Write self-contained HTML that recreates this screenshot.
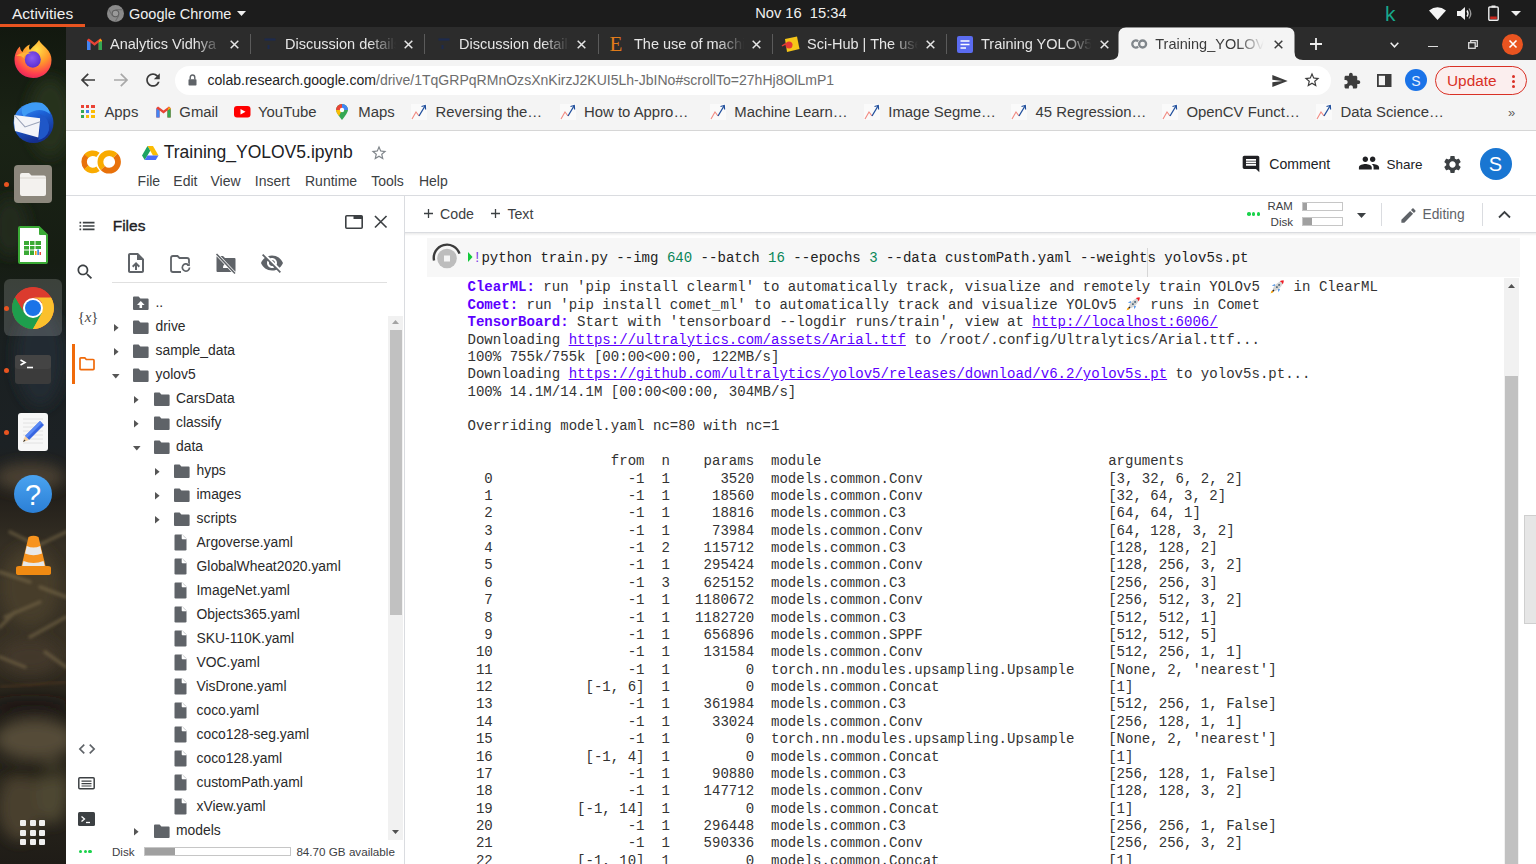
<!DOCTYPE html><html><head><meta charset="utf-8"><title>Colab</title><style>
*{box-sizing:border-box;margin:0;padding:0}
html,body{width:1536px;height:864px;overflow:hidden}
body{position:relative;font-family:"Liberation Sans",sans-serif;background:#fff;color:#202124}
.a{position:absolute;white-space:pre}
svg{position:absolute;overflow:visible}
pre{position:absolute;font-family:"Liberation Mono",monospace;white-space:pre}
</style></head><body>
<div class="a" style="left:0px;top:0px;width:1536px;height:27px;background:#1c1c1c"></div>
<div class="a" style="left:12px;top:6.38px;font-size:15.5px;line-height:15.5px;color:#f0f0f0;font-weight:400;font-family:'Liberation Sans';">Activities</div>
<div class="a" style="left:0px;top:24px;width:85px;height:3px;background:#e95420"></div>
<svg style="left:107px;top:5px;" width="17" height="17" viewBox="0 0 16 16"><circle cx="8" cy="8" r="8" fill="#8a8a8a"/><circle cx="8" cy="8" r="3.6" fill="#5c5c5c"/><circle cx="8" cy="8" r="2.6" fill="#9a9a9a"/><path d="M8 4.4 H15.2" stroke="#6e6e6e" stroke-width="1"/><path d="M4.9 9.8 L1.3 3.6" stroke="#6e6e6e" stroke-width="1"/><path d="M11.1 9.8 L7.5 16" stroke="#6e6e6e" stroke-width="1"/></svg>
<div class="a" style="left:129px;top:7.23px;font-size:14.5px;line-height:14.5px;color:#f0f0f0;font-weight:400;font-family:'Liberation Sans';">Google Chrome</div>
<svg style="left:237px;top:11px;" width="9" height="5" viewBox="0 0 9 5"><path d="M0 0H9L4.5 5z" fill="#eee"/></svg>
<div class="a" style="left:755.2px;top:6.37px;font-size:14.68px;line-height:14.68px;color:#f0f0f0;font-weight:400;font-family:'Liberation Sans';">Nov 16  15:34</div>
<div class="a" style="left:1385px;top:3.22px;font-size:21px;line-height:21px;color:#17a88b;font-weight:400;font-family:'Liberation Sans';">k</div>
<svg style="left:1429px;top:7px;" width="17" height="13" viewBox="0 0 17 13"><path d="M0 3.5 Q8.5 -3 17 3.5 L8.5 13z" fill="#f5f5f5"/></svg>
<svg style="left:1457px;top:6px;" width="16" height="15" viewBox="0 0 16 15"><path d="M0 5H3.5L8 1V14L3.5 10H0z" fill="#f2f2f2"/><path d="M10 4.5 Q12 7.5 10 10.5" stroke="#f2f2f2" stroke-width="1.4" fill="none"/><path d="M12 2.5 Q15.5 7.5 12 12.5" stroke="#999" stroke-width="1.3" fill="none"/></svg>
<svg style="left:1488px;top:5px;" width="11" height="16" viewBox="0 0 11 16"><rect x="3.5" y="0.5" width="4" height="2" fill="#eee"/><rect x="0.8" y="2" width="9.4" height="13.2" rx="1" fill="none" stroke="#eee" stroke-width="1.4"/><rect x="2.2" y="11.5" width="6.6" height="2.6" fill="#c8251b"/></svg>
<svg style="left:1511px;top:11px;" width="10" height="5" viewBox="0 0 10 5"><path d="M0 0H10L5 5z" fill="#eee"/></svg>
<svg style="left:0;top:27px" width="66" height="837" viewBox="0 0 66 837"><defs><filter id="bl" x="-50%" y="-50%" width="200%" height="200%"><feGaussianBlur stdDeviation="7"/></filter><filter id="bl2"><feGaussianBlur stdDeviation="1.6"/></filter>
<linearGradient id="dg" x1="0" y1="0" x2="0" y2="1">
<stop offset="0" stop-color="#12180f"/><stop offset="0.12" stop-color="#1a2315"/><stop offset="0.28" stop-color="#161d13"/><stop offset="0.38" stop-color="#1a2021"/><stop offset="0.5" stop-color="#1c2124"/><stop offset="0.56" stop-color="#221f1a"/><stop offset="0.62" stop-color="#352f24"/><stop offset="0.75" stop-color="#383124"/><stop offset="0.82" stop-color="#1f1c16"/><stop offset="0.9" stop-color="#2a261d"/><stop offset="1" stop-color="#1f1c17"/></linearGradient></defs>
<rect width="66" height="837" fill="url(#dg)"/>
<g filter="url(#bl)">
<ellipse cx="50" cy="90" rx="22" ry="40" fill="#26331c"/>
<ellipse cx="10" cy="200" rx="18" ry="30" fill="#212c1a"/>
<ellipse cx="40" cy="330" rx="25" ry="50" fill="#222b30"/>
<ellipse cx="30" cy="450" rx="35" ry="14" fill="#4a4030"/>
<ellipse cx="30" cy="560" rx="30" ry="40" fill="#463c2c"/>
<ellipse cx="30" cy="630" rx="30" ry="18" fill="#43392a"/>
<ellipse cx="35" cy="712" rx="40" ry="20" fill="#544c38"/>
<ellipse cx="20" cy="780" rx="22" ry="34" fill="#48412f"/>
<ellipse cx="52" cy="765" rx="16" ry="32" fill="#4d4633"/>
<ellipse cx="30" cy="745" rx="40" ry="5" fill="#14120e"/>
<ellipse cx="30" cy="680" rx="40" ry="7" fill="#1a1813"/>
</g>
<g filter="url(#bl2)" stroke="#7d6d4c" stroke-width="3.5" opacity="0.55" stroke-linecap="round">
<path d="M0 545 L30 555"/><path d="M35 520 L66 505"/><path d="M5 590 L40 575"/><path d="M30 610 L66 590"/><path d="M0 630 L25 640"/><path d="M40 560 L66 570"/><path d="M10 505 L30 515"/><path d="M45 625 L66 640"/><path d="M0 600 L15 585"/>
</g>
<path d="M0 660 L66 655" stroke="#7a4a20" stroke-width="2" opacity="0.35" filter="url(#bl2)"/>
</svg>
<svg style="left:13px;top:39px;" width="40" height="40" viewBox="0 0 40 40"><defs><radialGradient id="ff1" cx="0.6" cy="0.25" r="0.8"><stop offset="0" stop-color="#ffe14a"/><stop offset="0.45" stop-color="#ff9a2a"/><stop offset="0.8" stop-color="#ff3f4e"/><stop offset="1" stop-color="#e3245b"/></radialGradient>
<radialGradient id="ff2" cx="0.45" cy="0.4" r="0.6"><stop offset="0" stop-color="#8a5cf2"/><stop offset="1" stop-color="#5d2fd0"/></radialGradient></defs>
<path d="M20 39C9 39 1.5 30.5 1.5 21 1.5 15 4 10 7 7.5 7 10 8 12 9.5 13 11 9 14 6.5 17 5.5 15.5 8 16 10 17 11 19 8 23 6 26 1 27 4 30.5 6 33 9 37 13 38.5 17 38.5 21 38.5 31 31 39 20 39z" fill="url(#ff1)"/>
<ellipse cx="19.8" cy="20.5" rx="8" ry="8.3" fill="url(#ff2)"/>
<path d="M3 17 Q9 12 18 14 Q12 15 10.5 19 Q8 16 3 17z" fill="#ffb33a"/></svg>
<svg style="left:12px;top:100px;" width="43" height="44" viewBox="0 0 43 44"><defs><linearGradient id="tb" x1="0" y1="0" x2="0.4" y2="1"><stop offset="0" stop-color="#49a6ff"/><stop offset="0.45" stop-color="#1d63d8"/><stop offset="1" stop-color="#142f8f"/></linearGradient></defs><circle cx="21.5" cy="23" r="20" fill="url(#tb)"/><path d="M10 8 Q18 0 30 3 Q37 7 38 14 Q30 8 22 11 Q15 13 12 17 Q9 13 10 8z" fill="#3e9bf5"/><path d="M2.3 15 L28.3 18.2 L26.3 37.5 L3 30.9 Q1.5 23 2.3 15z" fill="#f3f4f8"/><path d="M2.3 15 L13 26.9 L28.9 21.5" stroke="#9aa3b8" stroke-width="1.1" fill="none"/><path d="M28.3 14 Q38 18 37 30 Q35 38 26.3 40 L28 30z" fill="#1f57c8"/></svg>
<svg style="left:14px;top:165px;" width="38" height="38" viewBox="0 0 38 38"><rect x="0" y="0" width="38" height="38" rx="4" fill="#8c877c"/><path d="M6 10 Q6 8 8 8 H15 L17.5 10.5 H30 Q32 10.5 32 12.5 V29 Q32 31 30 31 H8 Q6 31 6 29z" fill="#f3f1ee"/><path d="M6 13 H32" stroke="#d9d5cf" stroke-width="1"/></svg>
<svg style="left:18px;top:226px;" width="30" height="38" viewBox="0 0 30 38"><path d="M2 1 H21 L29 9 V36 Q29 37 28 37 H2 Q1 37 1 36 V2 Q1 1 2 1z" fill="#fff" stroke="#3aaa35" stroke-width="2"/><path d="M21 1 L29 9 H22 Q21 9 21 8z" fill="#3aaa35"/>
<rect x="6" y="15" width="17" height="14" fill="#3aaa35"/><path d="M6 19.5H23M6 24H23M11.5 15V29M17 15V29" stroke="#fff" stroke-width="1"/><rect x="16" y="23" width="7" height="7" fill="#fff"/><rect x="17" y="25" width="1.6" height="4" fill="#f39c12"/><rect x="19.3" y="23.5" width="1.6" height="5.5" fill="#2e86de"/><rect x="21.5" y="26" width="1.5" height="3" fill="#e74c3c"/></svg>
<div class="a" style="left:4px;top:279px;width:58px;height:57px;background:rgba(255,255,255,.16);border-radius:6px"></div>
<svg style="left:12px;top:287px;" width="42" height="42" viewBox="0 0 42 42"><circle cx="21" cy="21" r="21" fill="#db3b2e"/>
<path d="M21 21 L3.0 10.5 A21 21 0 0 0 21 42 z" fill="#1e9e4d"/>
<path d="M21 21 L39 10.5 A21 21 0 0 1 21 42 L21 42z" fill="#fbc02d"/>
<path d="M21 10.5 H39 A21 21 0 0 0 3.0 10.5 L12 26 A10.5 10.5 0 0 1 21 10.5z" fill="#db3b2e"/>
<path d="M12 26 L3 10.5 A21 21 0 0 0 21 42 L30 26z" fill="#1e9e4d"/>
<path d="M30 26 L21 42 A21 21 0 0 0 39 10.5 H21 A10.5 10.5 0 0 1 30 26z" fill="#fbc02d"/>
<circle cx="21" cy="21" r="10" fill="#fff"/><circle cx="21" cy="21" r="8" fill="#1a73e8"/></svg>
<svg style="left:15px;top:355px;" width="36" height="29" viewBox="0 0 36 29"><rect x="0" y="0" width="36" height="29" rx="3" fill="#3b3b3b"/><rect x="0" y="0" width="36" height="14" rx="3" fill="#444"/><path d="M5.5 5 L10 7.5 L5.5 10" stroke="#fff" stroke-width="1.6" fill="none"/><path d="M12 12.5 H18" stroke="#fff" stroke-width="1.6"/></svg>
<svg style="left:18px;top:413px;" width="30" height="38" viewBox="0 0 30 38"><rect x="0" y="0" width="30" height="38" rx="3" fill="#f7f7f7"/><path d="M5 6H25M5 10H25M5 14H25M5 18H25M5 22H25M5 26H25M5 30H25" stroke="#e2e2e2" stroke-width="1"/><path d="M22 8 L26 12 L11 27 L7 23z" fill="#3865e0"/><path d="M22 8 L24 10 L9 25 L7 23z" fill="#5a8af5"/><path d="M7 23 L11 27 L5 29z" fill="#f5d0a0"/><path d="M5 29 L6.3 26.4 L7.6 27.7z" fill="#333"/></svg>
<svg style="left:14px;top:475px;" width="38" height="38" viewBox="0 0 38 38"><defs><linearGradient id="hp" x1="0" y1="0" x2="0" y2="1"><stop offset="0" stop-color="#4aa3f0"/><stop offset="1" stop-color="#2b7fd6"/></linearGradient></defs><circle cx="19" cy="19" r="19" fill="url(#hp)"/><text x="19" y="30" text-anchor="middle" font-family="Liberation Sans" font-size="29" fill="#fff">?</text></svg>
<svg style="left:15px;top:535px;" width="37" height="41" viewBox="0 0 37 41"><path d="M13.5 2 Q18.5 -0.5 23.5 2 L31 33 H6z" fill="#f7931e"/><path d="M11.8 11 Q18.5 14 25.2 11 L27 18.5 Q18.5 22 10 18.5z" fill="#e8e8e8"/><path d="M8.5 26 Q18.5 30 28.5 26 L30 32 Q18.5 35 7 32z" fill="#e8e8e8"/><path d="M1 33 Q1 31 4 31 H33 Q36 31 36 33 V38 Q36 40 33 40 H4 Q1 40 1 38z" fill="#f08a12"/></svg>
<div class="a" style="left:4px;top:181.5px;width:5px;height:5px;border-radius:50%;background:#e95420"></div>
<div class="a" style="left:4px;top:305.5px;width:5px;height:5px;border-radius:50%;background:#e95420"></div>
<div class="a" style="left:4px;top:367.5px;width:5px;height:5px;border-radius:50%;background:#e95420"></div>
<div class="a" style="left:4px;top:429.5px;width:5px;height:5px;border-radius:50%;background:#e95420"></div>
<div class="a" style="left:20.0px;top:820.0px;width:6px;height:6px;background:#eee;border-radius:1px"></div>
<div class="a" style="left:20.0px;top:829.5px;width:6px;height:6px;background:#eee;border-radius:1px"></div>
<div class="a" style="left:20.0px;top:839.0px;width:6px;height:6px;background:#eee;border-radius:1px"></div>
<div class="a" style="left:29.5px;top:820.0px;width:6px;height:6px;background:#eee;border-radius:1px"></div>
<div class="a" style="left:29.5px;top:829.5px;width:6px;height:6px;background:#eee;border-radius:1px"></div>
<div class="a" style="left:29.5px;top:839.0px;width:6px;height:6px;background:#eee;border-radius:1px"></div>
<div class="a" style="left:39.0px;top:820.0px;width:6px;height:6px;background:#eee;border-radius:1px"></div>
<div class="a" style="left:39.0px;top:829.5px;width:6px;height:6px;background:#eee;border-radius:1px"></div>
<div class="a" style="left:39.0px;top:839.0px;width:6px;height:6px;background:#eee;border-radius:1px"></div>
<div class="a" style="left:66px;top:27px;width:1470px;height:33px;background:#2c2c2c"></div>
<div class="a" style="left:110px;top:36.73px;width:112px;overflow:hidden;font-size:14.5px;line-height:14.5px;height:19px;color:#e6e6e6;-webkit-mask-image:linear-gradient(90deg,#000 86px,transparent 112px)">Analytics Vidhya</div>
<svg style="left:230px;top:39.5px;" width="9" height="9" viewBox="0 0 9 9"><path d="M0.7 0.7L8.3 8.3M8.3 0.7L0.7 8.3" stroke="#e6e6e6" stroke-width="1.5"/></svg>
<div class="a" style="left:285px;top:36.73px;width:111px;overflow:hidden;font-size:14.5px;line-height:14.5px;height:19px;color:#e6e6e6;-webkit-mask-image:linear-gradient(90deg,#000 85px,transparent 111px)">Discussion details</div>
<svg style="left:404px;top:39.5px;" width="9" height="9" viewBox="0 0 9 9"><path d="M0.7 0.7L8.3 8.3M8.3 0.7L0.7 8.3" stroke="#e6e6e6" stroke-width="1.5"/></svg>
<div class="a" style="left:459px;top:36.73px;width:110px;overflow:hidden;font-size:14.5px;line-height:14.5px;height:19px;color:#e6e6e6;-webkit-mask-image:linear-gradient(90deg,#000 84px,transparent 110px)">Discussion details</div>
<svg style="left:577px;top:39.5px;" width="9" height="9" viewBox="0 0 9 9"><path d="M0.7 0.7L8.3 8.3M8.3 0.7L0.7 8.3" stroke="#e6e6e6" stroke-width="1.5"/></svg>
<div class="a" style="left:634px;top:36.73px;width:110px;overflow:hidden;font-size:14.5px;line-height:14.5px;height:19px;color:#e6e6e6;-webkit-mask-image:linear-gradient(90deg,#000 84px,transparent 110px)">The use of machine</div>
<svg style="left:752px;top:39.5px;" width="9" height="9" viewBox="0 0 9 9"><path d="M0.7 0.7L8.3 8.3M8.3 0.7L0.7 8.3" stroke="#e6e6e6" stroke-width="1.5"/></svg>
<div class="a" style="left:807px;top:36.73px;width:111px;overflow:hidden;font-size:14.5px;line-height:14.5px;height:19px;color:#e6e6e6;-webkit-mask-image:linear-gradient(90deg,#000 85px,transparent 111px)">Sci-Hub | The use</div>
<svg style="left:926px;top:39.5px;" width="9" height="9" viewBox="0 0 9 9"><path d="M0.7 0.7L8.3 8.3M8.3 0.7L0.7 8.3" stroke="#e6e6e6" stroke-width="1.5"/></svg>
<div class="a" style="left:981px;top:36.73px;width:110.5px;overflow:hidden;font-size:14.5px;line-height:14.5px;height:19px;color:#e6e6e6;-webkit-mask-image:linear-gradient(90deg,#000 84.5px,transparent 110.5px)">Training YOLOv5</div>
<svg style="left:1099.5px;top:39.5px;" width="9" height="9" viewBox="0 0 9 9"><path d="M0.7 0.7L8.3 8.3M8.3 0.7L0.7 8.3" stroke="#e6e6e6" stroke-width="1.5"/></svg>
<div class="a" style="left:249.5px;top:34px;width:1.2px;height:20px;background:#5b5b5b"></div>
<div class="a" style="left:424px;top:34px;width:1.2px;height:20px;background:#5b5b5b"></div>
<div class="a" style="left:598px;top:34px;width:1.2px;height:20px;background:#5b5b5b"></div>
<div class="a" style="left:772px;top:34px;width:1.2px;height:20px;background:#5b5b5b"></div>
<div class="a" style="left:945.5px;top:34px;width:1.2px;height:20px;background:#5b5b5b"></div>
<svg style="left:87px;top:38px;" width="15" height="12" viewBox="0 0 15 12"><path d="M0 2 V12 H3.4 V4.6 L7.5 7.7 11.6 4.6 V12 H15 V2 L13.2 0.6 7.5 4.8 1.8 0.6z" fill="#ea4335"/><path d="M0 2.5V12H3.4V4.6z" fill="#4285f4"/><path d="M15 2.5V12H11.6V4.6z" fill="#34a853"/><path d="M11.6 4.6 L15 2 V4.3 L13.2 0.6z" fill="#fbbc04"/></svg>
<svg style="left:264px;top:37px;" width="12" height="14" viewBox="0 0 12 14"><path d="M0.5 2.5 H11.5" stroke="#1d2a4d" stroke-width="2.2"/><path d="M4.5 8 V12" stroke="#1d2a4d" stroke-width="2"/></svg>
<svg style="left:438px;top:37px;" width="12" height="14" viewBox="0 0 12 14"><path d="M0.5 2.5 H11.5" stroke="#1d2a4d" stroke-width="2.2"/><path d="M4.5 8 V12" stroke="#1d2a4d" stroke-width="2"/></svg>
<div class="a" style="left:609.5px;top:33.72px;font-size:21px;line-height:21px;color:#e07b1a;font-weight:400;font-family:'Liberation Serif';">E</div>
<svg style="left:782px;top:36px;" width="18" height="17" viewBox="0 0 18 17"><path d="M3 3 L15 0.5 L17.5 13 L5 16z" fill="#f5c518"/><circle cx="7" cy="9" r="3.5" fill="#e53935"/><path d="M0 10 Q5 6 10 9" stroke="#e53935" stroke-width="1.5" fill="none"/></svg>
<svg style="left:957px;top:36px;" width="16" height="17" viewBox="0 0 16 17"><rect x="0" y="0" width="16" height="17" rx="2" fill="#5b6cf0"/><path d="M3.5 5H12.5M3.5 8.5H12.5M3.5 12H9" stroke="#fff" stroke-width="1.6"/></svg>
<svg style="left:1110px;top:27px" width="193" height="33" viewBox="0 0 193 33"><path d="M0 33 Q8.5 33 8.5 25 V8 Q8.5 0.5 16 0.5 H177 Q184.5 0.5 184.5 8 V25 Q184.5 33 193 33z" fill="#f4f4f4"/></svg>
<svg style="left:1131px;top:39px;" width="17" height="10" viewBox="0 0 17 10"><path d="M7.14 2.40 A3.5 3.5 0 1 0 7.14 7.60" stroke="#80868b" stroke-width="2.3" fill="none"/><circle cx="11.6" cy="5" r="3.5" stroke="#80868b" stroke-width="2.3" fill="none"/></svg>
<div class="a" style="left:1155.3px;top:36.73px;width:108.70000000000005px;overflow:hidden;font-size:14.5px;line-height:14.5px;height:19px;color:#3c3c3c;-webkit-mask-image:linear-gradient(90deg,#000 82.70000000000005px,transparent 108.70000000000005px)">Training_YOLOV5.ipynb</div>
<svg style="left:1274px;top:39.5px;" width="9" height="9" viewBox="0 0 9 9"><path d="M0.7 0.7L8.3 8.3M8.3 0.7L0.7 8.3" stroke="#3c3c3c" stroke-width="1.5"/></svg>
<svg style="left:1310px;top:38px;" width="12" height="12" viewBox="0 0 12 12"><path d="M6 0V12M0 6H12" stroke="#eee" stroke-width="1.8"/></svg>
<svg style="left:1390px;top:42px;" width="9" height="6" viewBox="0 0 9 6"><path d="M0.7 0.7 L4.5 4.8 L8.3 0.7" stroke="#eee" stroke-width="1.5" fill="none"/></svg>
<div class="a" style="left:1428px;top:45.5px;width:10px;height:1.6px;background:#ddd"></div>
<svg style="left:1468px;top:40px;" width="10" height="9" viewBox="0 0 10 9"><rect x="0.7" y="2.7" width="6.5" height="5.6" stroke="#ddd" stroke-width="1.3" fill="none"/><path d="M2.7 2.7 V0.7 H9.3 V6.3 H7.2" stroke="#ddd" stroke-width="1.3" fill="none"/></svg>
<div class="a" style="left:1502.4px;top:33.9px;width:20.8px;height:20.8px;border-radius:50%;background:#e95420"></div>
<svg style="left:1508.8px;top:40.3px;" width="8" height="8" viewBox="0 0 8 8"><path d="M0.5 0.5L7.5 7.5M7.5 0.5L0.5 7.5" stroke="#fff" stroke-width="1.6"/></svg>
<div class="a" style="left:66px;top:60px;width:1470px;height:71px;background:#f4f4f4;border-bottom:1px solid #d6d6d6"></div>
<div class="a" style="left:174.5px;top:65.5px;width:1156px;height:29px;border-radius:14.5px;background:#fff"></div>
<svg style="left:80px;top:72px;" width="16" height="16" viewBox="0 0 16 16"><path d="M15 8H2.2M8.2 1.8L2 8L8.2 14.2" stroke="#3c3c3c" stroke-width="1.7" fill="none"/></svg>
<svg style="left:112.5px;top:72px;" width="16" height="16" viewBox="0 0 16 16"><path d="M1 8H13.8M7.8 1.8L14 8L7.8 14.2" stroke="#a8a8a8" stroke-width="1.7" fill="none"/></svg>
<svg style="left:140.5px;top:68px;" width="24" height="24" viewBox="0 0 24 24"><path d="M17.65 6.35C16.2 4.9 14.21 4 12 4c-4.42 0-7.99 3.58-7.99 8s3.57 8 7.99 8c3.73 0 6.84-2.55 7.73-6h-2.08c-.82 2.33-3.04 4-5.65 4-3.31 0-6-2.69-6-6s2.69-6 6-6c1.66 0 3.14.69 4.22 1.78L13 11h7V4l-2.35 2.35z" fill="#3c3c3c" transform="translate(12 12) scale(0.85) translate(-12 -12)"/></svg>
<svg style="left:187.5px;top:74px;" width="9" height="12" viewBox="0 0 9 12"><path d="M2.2 5.5 V3.6 Q2.2 1 4.5 1 Q6.8 1 6.8 3.6 V5.5" stroke="#5f6368" stroke-width="1.4" fill="none"/><rect x="0.5" y="5.2" width="8" height="6.4" rx="0.8" fill="#5f6368"/></svg>
<div class="a" style="left:207.5px;top:73.32px;font-size:14.04px;line-height:14.04px;color:#242424;font-weight:400;font-family:'Liberation Sans';">colab.research.google.com<span style="color:#6d6d6d">/drive/1TqGRPqRMnOzsXnKirzJ2KUI5Lh-JbINo#scrollTo=27hHj8OlLmP1</span></div>
<svg style="left:1272px;top:74.5px;" width="16" height="12" viewBox="0 0 23 18"><path d="M0.01 18 L23 9 0.01 0 0 7 15 9 0 11z" fill="#3c3c3c"/></svg>
<svg style="left:1303px;top:71px;" width="18" height="18" viewBox="0 0 24 24"><path d="M22 9.24l-7.19-.62L12 2 9.19 8.63 2 9.24l5.46 4.73L5.82 21 12 17.27 18.18 21l-1.63-7.03L22 9.24zM12 15.4l-3.76 2.27 1-4.28-3.32-2.88 4.38-.38L12 6.1l1.71 4.04 4.38.38-3.32 2.88 1 4.28L12 15.4z" fill="#3c3c3c"/></svg>
<svg style="left:1343px;top:72px;" width="18" height="18" viewBox="0 0 24 24"><path d="M20.5 11H19V7c0-1.1-.9-2-2-2h-4V3.5C13 2.12 11.88 1 10.5 1S8 2.12 8 3.5V5H4c-1.1 0-1.99.9-1.99 2v3.8H3.5c1.49 0 2.7 1.21 2.7 2.7s-1.21 2.7-2.7 2.7H2V20c0 1.1.9 2 2 2h3.8v-1.5c0-1.49 1.21-2.7 2.7-2.7 1.49 0 2.7 1.21 2.7 2.7V22H17c1.1 0 2-.9 2-2v-4h1.5c1.38 0 2.5-1.12 2.5-2.5S21.88 11 20.5 11z" fill="#3c3c3c"/></svg>
<svg style="left:1377px;top:73.5px;" width="14.5" height="13" viewBox="0 0 14.5 13"><rect x="0.9" y="0.9" width="12.7" height="11.2" stroke="#3c3c3c" stroke-width="1.8" fill="none"/><rect x="8" y="0.9" width="5.6" height="11.2" fill="#3c3c3c"/></svg>
<div class="a" style="left:1405px;top:69px;width:22px;height:22px;border-radius:50%;background:#1a73e8"></div>
<div class="a" style="left:1411.3px;top:73.65px;font-size:14px;line-height:14px;color:#e8f0fe;font-weight:400;font-family:'Liberation Sans';">S</div>
<div class="a" style="left:1435px;top:66px;width:92px;height:28.5px;border-radius:14.25px;background:#fbeeee;border:1px solid #d93025"></div>
<div class="a" style="left:1447px;top:72.96px;font-size:15.4px;line-height:15.4px;color:#d93025;font-weight:400;font-family:'Liberation Sans';">Update</div>
<div class="a" style="left:1512px;top:74.5px;width:3px;height:3px;border-radius:50%;background:#d93025"></div>
<div class="a" style="left:1512px;top:79.5px;width:3px;height:3px;border-radius:50%;background:#d93025"></div>
<div class="a" style="left:1512px;top:84.5px;width:3px;height:3px;border-radius:50%;background:#d93025"></div>
<div class="a" style="left:81.0px;top:104.5px;width:3.2px;height:3.2px;background:#ea4335"></div>
<div class="a" style="left:81.0px;top:109.7px;width:3.2px;height:3.2px;background:#34a853"></div>
<div class="a" style="left:81.0px;top:114.9px;width:3.2px;height:3.2px;background:#34a853"></div>
<div class="a" style="left:86.2px;top:104.5px;width:3.2px;height:3.2px;background:#ea4335"></div>
<div class="a" style="left:86.2px;top:109.7px;width:3.2px;height:3.2px;background:#4285f4"></div>
<div class="a" style="left:86.2px;top:114.9px;width:3.2px;height:3.2px;background:#fbbc04"></div>
<div class="a" style="left:91.4px;top:104.5px;width:3.2px;height:3.2px;background:#ea4335"></div>
<div class="a" style="left:91.4px;top:109.7px;width:3.2px;height:3.2px;background:#fbbc04"></div>
<div class="a" style="left:91.4px;top:114.9px;width:3.2px;height:3.2px;background:#fbbc04"></div>
<div class="a" style="left:104.4px;top:105.19px;font-size:14.9px;line-height:14.9px;color:#3a3a3a;font-weight:400;font-family:'Liberation Sans';">Apps</div>
<svg style="left:155.5px;top:106px;" width="15" height="11.5" viewBox="0 0 15 12"><path d="M0 2 V12 H3.4 V4.6 L7.5 7.7 11.6 4.6 V12 H15 V2 L13.2 0.6 7.5 4.8 1.8 0.6z" fill="#ea4335"/><path d="M0 2.5V12H3.4V4.6z" fill="#4285f4"/><path d="M15 2.5V12H11.6V4.6z" fill="#34a853"/><path d="M11.6 4.6 L15 2 V4.3 L13.2 0.6z" fill="#fbbc04"/></svg>
<div class="a" style="left:179.3px;top:105.19px;font-size:14.9px;line-height:14.9px;color:#3a3a3a;font-weight:400;font-family:'Liberation Sans';">Gmail</div>
<svg style="left:233.5px;top:105.5px;" width="16.5" height="11.5" viewBox="0 0 16.5 11.5"><rect width="16.5" height="11.5" rx="3" fill="#ff0000"/><path d="M6.5 3 L11.5 5.75 L6.5 8.5z" fill="#fff"/></svg>
<div class="a" style="left:258px;top:105.19px;font-size:14.9px;line-height:14.9px;color:#3a3a3a;font-weight:400;font-family:'Liberation Sans';">YouTube</div>
<svg style="left:336px;top:103.5px;" width="12" height="16" viewBox="0 0 12 16"><path d="M6 16 Q0 8.5 0 6 A6 6 0 0 1 12 6 Q12 8.5 6 16z" fill="#34a853"/><path d="M6 0 A6 6 0 0 1 12 6 L6 6z" fill="#4285f4"/><path d="M0 6 A6 6 0 0 1 6 0 L6 6z" fill="#ea4335"/><path d="M0 6 Q0 8.5 3 12 L6 6z" fill="#fbbc04"/><circle cx="6" cy="6" r="2.2" fill="#fff"/></svg>
<div class="a" style="left:358.3px;top:105.19px;font-size:14.9px;line-height:14.9px;color:#3a3a3a;font-weight:400;font-family:'Liberation Sans';">Maps</div>
<svg style="left:411px;top:103.5px;" width="16" height="16" viewBox="0 0 16 16"><rect width="16" height="16" fill="#fafafa"/><path d="M1 15 L5 8 L8 12" stroke="#f28b82" stroke-width="1.1" fill="none"/><path d="M8 12 L14 2" stroke="#1f4e9c" stroke-width="1.3" fill="none"/><path d="M10.5 2.5 L14.3 1.5 L14.6 5.5" stroke="#1f4e9c" stroke-width="1.2" fill="none"/></svg>
<div class="a" style="left:435.5px;top:105.19px;font-size:14.9px;line-height:14.9px;color:#3a3a3a;font-weight:400;font-family:'Liberation Sans';">Reversing the…</div>
<svg style="left:559.5px;top:103.5px;" width="16" height="16" viewBox="0 0 16 16"><rect width="16" height="16" fill="#fafafa"/><path d="M1 15 L5 8 L8 12" stroke="#f28b82" stroke-width="1.1" fill="none"/><path d="M8 12 L14 2" stroke="#1f4e9c" stroke-width="1.3" fill="none"/><path d="M10.5 2.5 L14.3 1.5 L14.6 5.5" stroke="#1f4e9c" stroke-width="1.2" fill="none"/></svg>
<div class="a" style="left:584px;top:105.19px;font-size:14.9px;line-height:14.9px;color:#3a3a3a;font-weight:400;font-family:'Liberation Sans';">How to Appro…</div>
<svg style="left:710px;top:103.5px;" width="16" height="16" viewBox="0 0 16 16"><rect width="16" height="16" fill="#fafafa"/><path d="M1 15 L5 8 L8 12" stroke="#f28b82" stroke-width="1.1" fill="none"/><path d="M8 12 L14 2" stroke="#1f4e9c" stroke-width="1.3" fill="none"/><path d="M10.5 2.5 L14.3 1.5 L14.6 5.5" stroke="#1f4e9c" stroke-width="1.2" fill="none"/></svg>
<div class="a" style="left:734.3px;top:105.19px;font-size:14.9px;line-height:14.9px;color:#3a3a3a;font-weight:400;font-family:'Liberation Sans';">Machine Learn…</div>
<svg style="left:864px;top:103.5px;" width="16" height="16" viewBox="0 0 16 16"><rect width="16" height="16" fill="#fafafa"/><path d="M1 15 L5 8 L8 12" stroke="#f28b82" stroke-width="1.1" fill="none"/><path d="M8 12 L14 2" stroke="#1f4e9c" stroke-width="1.3" fill="none"/><path d="M10.5 2.5 L14.3 1.5 L14.6 5.5" stroke="#1f4e9c" stroke-width="1.2" fill="none"/></svg>
<div class="a" style="left:888.3px;top:105.19px;font-size:14.9px;line-height:14.9px;color:#3a3a3a;font-weight:400;font-family:'Liberation Sans';">Image Segme…</div>
<svg style="left:1011.4px;top:103.5px;" width="16" height="16" viewBox="0 0 16 16"><rect width="16" height="16" fill="#fafafa"/><path d="M1 15 L5 8 L8 12" stroke="#f28b82" stroke-width="1.1" fill="none"/><path d="M8 12 L14 2" stroke="#1f4e9c" stroke-width="1.3" fill="none"/><path d="M10.5 2.5 L14.3 1.5 L14.6 5.5" stroke="#1f4e9c" stroke-width="1.2" fill="none"/></svg>
<div class="a" style="left:1035.5px;top:105.19px;font-size:14.9px;line-height:14.9px;color:#3a3a3a;font-weight:400;font-family:'Liberation Sans';">45 Regression…</div>
<svg style="left:1162.3px;top:103.5px;" width="16" height="16" viewBox="0 0 16 16"><rect width="16" height="16" fill="#fafafa"/><path d="M1 15 L5 8 L8 12" stroke="#f28b82" stroke-width="1.1" fill="none"/><path d="M8 12 L14 2" stroke="#1f4e9c" stroke-width="1.3" fill="none"/><path d="M10.5 2.5 L14.3 1.5 L14.6 5.5" stroke="#1f4e9c" stroke-width="1.2" fill="none"/></svg>
<div class="a" style="left:1186.4px;top:105.19px;font-size:14.9px;line-height:14.9px;color:#3a3a3a;font-weight:400;font-family:'Liberation Sans';">OpenCV Funct…</div>
<svg style="left:1316px;top:103.5px;" width="16" height="16" viewBox="0 0 16 16"><rect width="16" height="16" fill="#fafafa"/><path d="M1 15 L5 8 L8 12" stroke="#f28b82" stroke-width="1.1" fill="none"/><path d="M8 12 L14 2" stroke="#1f4e9c" stroke-width="1.3" fill="none"/><path d="M10.5 2.5 L14.3 1.5 L14.6 5.5" stroke="#1f4e9c" stroke-width="1.2" fill="none"/></svg>
<div class="a" style="left:1340.4px;top:105.19px;font-size:14.9px;line-height:14.9px;color:#3a3a3a;font-weight:400;font-family:'Liberation Sans';">Data Science…</div>
<div class="a" style="left:1508px;top:105.50px;font-size:13px;line-height:13px;color:#5f5f5f;font-weight:400;font-family:'Liberation Sans';">»</div>
<div class="a" style="left:66px;top:131px;width:1470px;height:65px;background:#fff;border-bottom:1px solid #dadce0"></div>
<svg style="left:70px;top:140px;" width="60" height="40" viewBox="0 0 60 40"><path d="M16.17 16.24 A8.65 8.65 0 0 1 28.01 14.89" stroke="#f9ab00" stroke-width="5.5" fill="none"/><path d="M16.37 27.59 A8.65 8.65 0 0 1 16.37 16.01" stroke="#e8710a" stroke-width="5.5" fill="none"/><path d="M28.01 28.71 A8.65 8.65 0 0 1 16.17 27.36" stroke="#f9ab00" stroke-width="5.5" fill="none"/><path d="M45.32 15.58 A8.8 8.8 0 1 1 32.77 27.91" stroke="#e8710a" stroke-width="5.8" fill="none"/><path d="M32.77 27.91 A8.8 8.8 0 0 1 45.32 15.58" stroke="#f9ab00" stroke-width="5.8" fill="none"/></svg>
<svg style="left:141.5px;top:145.5px;" width="16.5" height="14" viewBox="0 0 16.5 14"><path d="M5.5 0 H11 L16.5 9.5 H11z" fill="#fbbc04"/><path d="M5.5 0 L0 9.5 L2.75 14 L8.25 4.75z" fill="#1ea362"/><path d="M2.75 14 H13.75 L16.5 9.5 H5.5z" fill="#4a6cf7"/></svg>
<div class="a" style="left:163.7px;top:144.09px;font-size:17.5px;line-height:17.5px;color:#202124;font-weight:400;font-family:'Liberation Sans';">Training_YOLOV5.ipynb</div>
<svg style="left:370px;top:144px;" width="18" height="18" viewBox="0 0 24 24"><path d="M22 9.24l-7.19-.62L12 2 9.19 8.63 2 9.24l5.46 4.73L5.82 21 12 17.27 18.18 21l-1.63-7.03L22 9.24zM12 15.4l-3.76 2.27 1-4.28-3.32-2.88 4.38-.38L12 6.1l1.71 4.04 4.38.38-3.32 2.88 1 4.28L12 15.4z" fill="#80868b"/></svg>
<div class="a" style="left:137.6px;top:173.55px;font-size:14px;line-height:14px;color:#3c4043;font-weight:400;font-family:'Liberation Sans';">File</div>
<div class="a" style="left:173.3px;top:173.55px;font-size:14px;line-height:14px;color:#3c4043;font-weight:400;font-family:'Liberation Sans';">Edit</div>
<div class="a" style="left:210.5px;top:173.55px;font-size:14px;line-height:14px;color:#3c4043;font-weight:400;font-family:'Liberation Sans';">View</div>
<div class="a" style="left:254.8px;top:173.55px;font-size:14px;line-height:14px;color:#3c4043;font-weight:400;font-family:'Liberation Sans';">Insert</div>
<div class="a" style="left:305px;top:173.55px;font-size:14px;line-height:14px;color:#3c4043;font-weight:400;font-family:'Liberation Sans';">Runtime</div>
<div class="a" style="left:371.2px;top:173.55px;font-size:14px;line-height:14px;color:#3c4043;font-weight:400;font-family:'Liberation Sans';">Tools</div>
<div class="a" style="left:418.9px;top:173.55px;font-size:14px;line-height:14px;color:#3c4043;font-weight:400;font-family:'Liberation Sans';">Help</div>
<svg style="left:1241px;top:154px;" width="20" height="20" viewBox="0 0 24 24"><path d="M21.99 4c0-1.1-.89-2-1.99-2H4c-1.1 0-2 .9-2 2v12c0 1.1.9 2 2 2h14l4 4-.01-18zM18 14H6v-2h12v2zm0-3H6V9h12v2zm0-3H6V6h12v2z" fill="#202124"/></svg>
<div class="a" style="left:1269.3px;top:157.19px;font-size:14.07px;line-height:14.07px;color:#202124;font-weight:400;font-family:'Liberation Sans';">Comment</div>
<svg style="left:1357.5px;top:152px;" width="22" height="22" viewBox="0 0 24 24"><path d="M16 11c1.66 0 2.99-1.34 2.99-3S17.66 5 16 5c-1.66 0-3 1.34-3 3s1.34 3 3 3zm-8 0c1.66 0 2.99-1.34 2.99-3S9.66 5 8 5C6.34 5 5 6.34 5 8s1.34 3 3 3zm0 2c-2.33 0-7 1.17-7 3.5V19h14v-2.5c0-2.330-4.67-3.5-7-3.5zm8 0c-.29 0-.62.02-.97.05 1.16.84 1.97 1.97 1.97 3.45V19h6v-2.5c0-2.33-4.67-3.5-7-3.5z" fill="#202124"/></svg>
<div class="a" style="left:1386.5px;top:157.67px;font-size:13.5px;line-height:13.5px;color:#202124;font-weight:400;font-family:'Liberation Sans';">Share</div>
<svg style="left:1441.5px;top:153.5px;" width="21" height="21" viewBox="0 0 24 24"><path d="M19.14 12.94c.04-.3.06-.61.06-.94 0-.32-.02-.64-.07-.94l2.03-1.58c.18-.14.23-.41.12-.61l-1.92-3.32c-.12-.22-.37-.29-.59-.22l-2.39.96c-.5-.38-1.030-.7-1.62-.94l-.36-2.54c-.04-.24-.24-.41-.48-.41h-3.84c-.24 0-.43.17-.47.41l-.36 2.54c-.59.24-1.13.57-1.62.94l-2.39-.96c-.22-.08-.47 0-.59.22L2.74 8.87c-.12.21-.08.47.12.61l2.03 1.58c-.05.3-.09.63-.09.94s.02.64.07.94l-2.03 1.58c-.18.14-.23.41-.12.61l1.92 3.32c.12.22.37.29.59.22l2.39-.96c.5.38 1.03.7 1.62.94l.36 2.54c.05.24.24.41.48.41h3.84c.24 0 .44-.17.47-.41l.36-2.54c.59-.24 1.13-.56 1.62-.94l2.39.96c.22.08.47 0 .59-.22l1.92-3.32c.12-.22.07-.47-.12-.61l-2.01-1.58zM12 15.6c-1.98 0-3.6-1.62-3.6-3.6s1.62-3.6 3.6-3.6 3.6 1.62 3.6 3.6-1.62 3.6-3.6 3.6z" fill="#3c4043"/></svg>
<div class="a" style="left:1480px;top:148px;width:32px;height:32px;border-radius:50%;background:#1976d2"></div>
<div class="a" style="left:1488.8px;top:154.07px;font-size:20px;line-height:20px;color:#fff;font-weight:400;font-family:'Liberation Sans';">S</div>
<div class="a" style="left:66px;top:196px;width:338px;height:668px;background:#fff"></div>
<div class="a" style="left:404px;top:196px;width:1px;height:668px;background:#dadce0"></div>
<svg style="left:76.5px;top:215.5px;" width="20" height="20" viewBox="0 0 24 24"><path d="M3 13h2v-2H3v2zm0 4h2v-2H3v2zm0-8h2V7H3v2zm4 4h14v-2H7v2zm0 4h14v-2H7v2zM7 7v2h14V7H7z" fill="#3c4043"/></svg>
<svg style="left:75px;top:262px;" width="20" height="20" viewBox="0 0 24 24"><path d="M15.5 14h-.79l-.28-.27C15.41 12.59 16 11.11 16 9.5 16 5.91 13.09 3 9.5 3S3 5.91 3 9.5 5.91 16 9.5 16c1.61 0 3.09-.59 4.23-1.57l.27.28v.79l5 4.99L20.49 19l-4.99-5zm-6 0C7.01 14 5 11.99 5 9.5S7.01 5 9.5 5 14 7.01 14 9.5 11.99 14 9.5 14z" fill="#3c4043"/></svg>
<div class="a" style="left:77.5px;top:308.88px;font-size:15.5px;line-height:15.5px;color:#4a4a4a;font-weight:400;font-family:'Liberation Serif';letter-spacing:-0.3px">{<i style="font-family:Liberation Serif;font-size:15px">x</i>}</div>
<div class="a" style="left:72px;top:344px;width:3.2px;height:39.5px;background:#f06a0a"></div>
<svg style="left:78.5px;top:357px;" width="16" height="13.5" viewBox="0 0 16 13.5"><path d="M1 1.8 Q1 0.9 1.9 0.9 H5.8 L7.3 2.5 H14.1 Q15 2.5 15 3.4 V11.7 Q15 12.6 14.1 12.6 H1.9 Q1 12.6 1 11.7z" stroke="#f06a0a" stroke-width="1.7" fill="none"/></svg>
<svg style="left:76.5px;top:738.5px;" width="20" height="20" viewBox="0 0 24 24"><path d="M9.4 16.6L4.8 12l4.6-4.6L8 6l-6 6 6 6 1.4-1.4zm5.2 0l4.6-4.6-4.6-4.6L16 6l6 6-6 6-1.4-1.4z" fill="#5f6368"/></svg>
<svg style="left:78px;top:776.5px;" width="17" height="12.5" viewBox="0 0 17 12.5"><rect x="0.8" y="0.8" width="15.4" height="10.9" rx="1" stroke="#3c4043" stroke-width="1.5" fill="none"/><path d="M3.5 4.2H13.5M3.5 6.6H13.5M3.5 9H13.5" stroke="#3c4043" stroke-width="1.2"/></svg>
<svg style="left:78px;top:811.5px;" width="17" height="14" viewBox="0 0 17 14"><rect x="0" y="0" width="17" height="14" rx="1.5" fill="#3c4043"/><path d="M3.5 4.5 L6.5 7 L3.5 9.5" stroke="#fff" stroke-width="1.3" fill="none"/><path d="M8 10.5H12" stroke="#fff" stroke-width="1.3"/></svg>
<div class="a" style="left:79.0px;top:850px;width:3.4px;height:3.4px;background:#19d24a;border-radius:50%"></div>
<div class="a" style="left:83.6px;top:850px;width:3.4px;height:3.4px;background:#19d24a;border-radius:50%"></div>
<div class="a" style="left:88.2px;top:850px;width:3.4px;height:3.4px;background:#19d24a;border-radius:50%"></div>
<div class="a" style="left:112.7px;top:218.38px;font-size:15.5px;line-height:15.5px;color:#202124;font-weight:400;font-family:'Liberation Sans';-webkit-text-stroke:0.35px #202124">Files</div>
<svg style="left:345px;top:214.5px;" width="18" height="14" viewBox="0 0 18 14"><rect x="0.8" y="0.8" width="16.4" height="12.4" rx="1" stroke="#3c4043" stroke-width="1.6" fill="none"/><rect x="8.5" y="0.8" width="8.7" height="3.2" fill="#3c4043"/></svg>
<svg style="left:374px;top:215px;" width="13.5" height="13.5" viewBox="0 0 14 14"><path d="M1 1L13 13M13 1L1 13" stroke="#3c4043" stroke-width="1.7"/></svg>
<svg style="left:124px;top:251px;" width="24" height="24" viewBox="0 0 24 24"><path d="M14 2H6c-1.1 0-1.99.9-1.99 2L4 20c0 1.1.89 2 1.99 2H18c1.1 0 2-.9 2-2V8l-6-6zm4 18H6V4h7v5h5v11zM8 15.01l1.41 1.41L11 14.84V19h2v-4.16l1.59 1.59L16 15.01 12.01 11 8 15.01z" fill="#5f6368"/></svg>
<svg style="left:169.5px;top:254.5px;" width="21.5" height="18" viewBox="0 0 21.5 18"><path d="M1 3 Q1 1 3 1 H7.5 L9.5 3 H17 Q19 3 19 5 V8.5" stroke="#5f6368" stroke-width="1.8" fill="none"/><path d="M1 3 V15 Q1 17 3 17 H11" stroke="#5f6368" stroke-width="1.8" fill="none"/><path d="M19.5 12.5 A3.6 3.6 0 1 1 18.3 9.8" stroke="#5f6368" stroke-width="1.7" fill="none"/><path d="M19.8 7.8 V11 H16.6z" fill="#5f6368"/></svg>
<svg style="left:214.5px;top:252.5px;" width="22.5" height="21.5" viewBox="0 0 22.5 21.5"><path d="M1.5 4 Q1.5 3 2.5 3 H8 L10 5 H19.5 Q20.5 5 20.5 6 V18 Q20.5 19 19.5 19 H2.5 Q1.5 19 1.5 18z" fill="#5f6368"/><path d="M8 15 Q8 11 11 11 Q14 11 14 15z" fill="#fff"/><path d="M1.5 1 L20 20.5" stroke="#fff" stroke-width="3"/><path d="M1.5 1 L20 20.5" stroke="#5f6368" stroke-width="1.6"/></svg>
<svg style="left:259.5px;top:251px;" width="24" height="24" viewBox="0 0 24 24"><path d="M12 7c2.76 0 5 2.24 5 5 0 .65-.13 1.26-.36 1.83l2.92 2.92c1.51-1.26 2.7-2.89 3.43-4.75-1.73-4.39-6-7.5-11-7.5-1.4 0-2.74.25-3.98.7l2.16 2.16C10.74 7.13 11.35 7 12 7zM2 4.27l2.28 2.28.46.46C3.08 8.3 1.78 10.02 1 12c1.73 4.39 6 7.5 11 7.5 1.55 0 3.03-.3 4.38-.84l.42.42L19.73 22 21 20.73 3.27 3 2 4.27zM7.53 9.8l1.55 1.55c-.05.21-.08.43-.08.65 0 1.66 1.34 3 3 3 .22 0 .44-.03.65-.08l1.55 1.55c-.67.33-1.41.53-2.2.53-2.76 0-5-2.24-5-5 0-.79.2-1.53.53-2.2zm4.31-.78l3.15 3.15.02-.16c0-1.66-1.34-3-3-3l-.17.01z" fill="#5f6368"/></svg>
<div class="a" style="left:111.5px;top:282px;width:275.5px;height:1px;background:#e0e0e0"></div>
<svg style="left:132.0px;top:295.7px;" width="17.5" height="14.5" viewBox="0 0 17.5 14.5"><path d="M1 1.6 Q1 0.6 2 0.6 H6.6 L8.4 2.4 H15.6 Q16.6 2.4 16.6 3.4 V13 Q16.6 14 15.6 14 H2 Q1 14 1 13z" fill="#5f6368"/></svg>
<svg style="left:132.0px;top:295.7px;" width="17.5" height="14.5" viewBox="0 0 17.5 14.5"><path d="M8.8 5 L5 9 H7.5 V12 H10.1 V9 H12.6z" fill="#fff"/></svg>
<div class="a" style="left:155.5px;top:295.95px;font-size:13.88px;line-height:13.88px;color:#2a2a2a;font-weight:400;font-family:'Liberation Sans';">..</div>
<svg style="left:132.0px;top:319.7px;" width="17.5" height="14.5" viewBox="0 0 17.5 14.5"><path d="M1 1.6 Q1 0.6 2 0.6 H6.6 L8.4 2.4 H15.6 Q16.6 2.4 16.6 3.4 V13 Q16.6 14 15.6 14 H2 Q1 14 1 13z" fill="#5f6368"/></svg>
<svg style="left:113.8px;top:323.7px;" width="4.6" height="7.6" viewBox="0 0 4.6 7.6"><path d="M0 0 L4.6 3.8 L0 7.6z" fill="#555"/></svg>
<div class="a" style="left:155.5px;top:319.95px;font-size:13.88px;line-height:13.88px;color:#2a2a2a;font-weight:400;font-family:'Liberation Sans';">drive</div>
<svg style="left:132.0px;top:343.7px;" width="17.5" height="14.5" viewBox="0 0 17.5 14.5"><path d="M1 1.6 Q1 0.6 2 0.6 H6.6 L8.4 2.4 H15.6 Q16.6 2.4 16.6 3.4 V13 Q16.6 14 15.6 14 H2 Q1 14 1 13z" fill="#5f6368"/></svg>
<svg style="left:113.8px;top:347.7px;" width="4.6" height="7.6" viewBox="0 0 4.6 7.6"><path d="M0 0 L4.6 3.8 L0 7.6z" fill="#555"/></svg>
<div class="a" style="left:155.5px;top:343.95px;font-size:13.88px;line-height:13.88px;color:#2a2a2a;font-weight:400;font-family:'Liberation Sans';">sample_data</div>
<svg style="left:132.0px;top:367.7px;" width="17.5" height="14.5" viewBox="0 0 17.5 14.5"><path d="M1 1.6 Q1 0.6 2 0.6 H6.6 L8.4 2.4 H15.6 Q16.6 2.4 16.6 3.4 V13 Q16.6 14 15.6 14 H2 Q1 14 1 13z" fill="#5f6368"/></svg>
<svg style="left:112.2px;top:373.7px;" width="7.6" height="4.6" viewBox="0 0 7.6 4.6"><path d="M0 0 L7.6 0 L3.8 4.6z" fill="#555"/></svg>
<div class="a" style="left:155.5px;top:367.95px;font-size:13.88px;line-height:13.88px;color:#2a2a2a;font-weight:400;font-family:'Liberation Sans';">yolov5</div>
<svg style="left:152.5px;top:391.7px;" width="17.5" height="14.5" viewBox="0 0 17.5 14.5"><path d="M1 1.6 Q1 0.6 2 0.6 H6.6 L8.4 2.4 H15.6 Q16.6 2.4 16.6 3.4 V13 Q16.6 14 15.6 14 H2 Q1 14 1 13z" fill="#5f6368"/></svg>
<svg style="left:134.3px;top:395.7px;" width="4.6" height="7.6" viewBox="0 0 4.6 7.6"><path d="M0 0 L4.6 3.8 L0 7.6z" fill="#555"/></svg>
<div class="a" style="left:176.0px;top:391.95px;font-size:13.88px;line-height:13.88px;color:#2a2a2a;font-weight:400;font-family:'Liberation Sans';">CarsData</div>
<svg style="left:152.5px;top:415.7px;" width="17.5" height="14.5" viewBox="0 0 17.5 14.5"><path d="M1 1.6 Q1 0.6 2 0.6 H6.6 L8.4 2.4 H15.6 Q16.6 2.4 16.6 3.4 V13 Q16.6 14 15.6 14 H2 Q1 14 1 13z" fill="#5f6368"/></svg>
<svg style="left:134.3px;top:419.7px;" width="4.6" height="7.6" viewBox="0 0 4.6 7.6"><path d="M0 0 L4.6 3.8 L0 7.6z" fill="#555"/></svg>
<div class="a" style="left:176.0px;top:415.95px;font-size:13.88px;line-height:13.88px;color:#2a2a2a;font-weight:400;font-family:'Liberation Sans';">classify</div>
<svg style="left:152.5px;top:439.7px;" width="17.5" height="14.5" viewBox="0 0 17.5 14.5"><path d="M1 1.6 Q1 0.6 2 0.6 H6.6 L8.4 2.4 H15.6 Q16.6 2.4 16.6 3.4 V13 Q16.6 14 15.6 14 H2 Q1 14 1 13z" fill="#5f6368"/></svg>
<svg style="left:132.7px;top:445.7px;" width="7.6" height="4.6" viewBox="0 0 7.6 4.6"><path d="M0 0 L7.6 0 L3.8 4.6z" fill="#555"/></svg>
<div class="a" style="left:176.0px;top:439.95px;font-size:13.88px;line-height:13.88px;color:#2a2a2a;font-weight:400;font-family:'Liberation Sans';">data</div>
<svg style="left:173.0px;top:463.7px;" width="17.5" height="14.5" viewBox="0 0 17.5 14.5"><path d="M1 1.6 Q1 0.6 2 0.6 H6.6 L8.4 2.4 H15.6 Q16.6 2.4 16.6 3.4 V13 Q16.6 14 15.6 14 H2 Q1 14 1 13z" fill="#5f6368"/></svg>
<svg style="left:154.8px;top:467.7px;" width="4.6" height="7.6" viewBox="0 0 4.6 7.6"><path d="M0 0 L4.6 3.8 L0 7.6z" fill="#555"/></svg>
<div class="a" style="left:196.5px;top:463.95px;font-size:13.88px;line-height:13.88px;color:#2a2a2a;font-weight:400;font-family:'Liberation Sans';">hyps</div>
<svg style="left:173.0px;top:487.7px;" width="17.5" height="14.5" viewBox="0 0 17.5 14.5"><path d="M1 1.6 Q1 0.6 2 0.6 H6.6 L8.4 2.4 H15.6 Q16.6 2.4 16.6 3.4 V13 Q16.6 14 15.6 14 H2 Q1 14 1 13z" fill="#5f6368"/></svg>
<svg style="left:154.8px;top:491.7px;" width="4.6" height="7.6" viewBox="0 0 4.6 7.6"><path d="M0 0 L4.6 3.8 L0 7.6z" fill="#555"/></svg>
<div class="a" style="left:196.5px;top:487.95px;font-size:13.88px;line-height:13.88px;color:#2a2a2a;font-weight:400;font-family:'Liberation Sans';">images</div>
<svg style="left:173.0px;top:511.7px;" width="17.5" height="14.5" viewBox="0 0 17.5 14.5"><path d="M1 1.6 Q1 0.6 2 0.6 H6.6 L8.4 2.4 H15.6 Q16.6 2.4 16.6 3.4 V13 Q16.6 14 15.6 14 H2 Q1 14 1 13z" fill="#5f6368"/></svg>
<svg style="left:154.8px;top:515.7px;" width="4.6" height="7.6" viewBox="0 0 4.6 7.6"><path d="M0 0 L4.6 3.8 L0 7.6z" fill="#555"/></svg>
<div class="a" style="left:196.5px;top:511.95px;font-size:13.88px;line-height:13.88px;color:#2a2a2a;font-weight:400;font-family:'Liberation Sans';">scripts</div>
<svg style="left:174.0px;top:534.3px;" width="13" height="17" viewBox="0 0 13 17"><path d="M1.5 0.5 H8.2 L12.5 4.8 V15.3 Q12.5 16.5 11.3 16.5 H1.5 Q0.5 16.5 0.5 15.3 V1.7 Q0.5 0.5 1.5 0.5z" fill="#5f6368"/><path d="M8 0.5 V5 H12.5" fill="#fff"/><path d="M8.2 0.5 V4.8 H12.5" stroke="#fff" stroke-width="1" fill="none"/></svg>
<div class="a" style="left:196.5px;top:535.95px;font-size:13.88px;line-height:13.88px;color:#2a2a2a;font-weight:400;font-family:'Liberation Sans';">Argoverse.yaml</div>
<svg style="left:174.0px;top:558.3px;" width="13" height="17" viewBox="0 0 13 17"><path d="M1.5 0.5 H8.2 L12.5 4.8 V15.3 Q12.5 16.5 11.3 16.5 H1.5 Q0.5 16.5 0.5 15.3 V1.7 Q0.5 0.5 1.5 0.5z" fill="#5f6368"/><path d="M8 0.5 V5 H12.5" fill="#fff"/><path d="M8.2 0.5 V4.8 H12.5" stroke="#fff" stroke-width="1" fill="none"/></svg>
<div class="a" style="left:196.5px;top:559.95px;font-size:13.88px;line-height:13.88px;color:#2a2a2a;font-weight:400;font-family:'Liberation Sans';">GlobalWheat2020.yaml</div>
<svg style="left:174.0px;top:582.3px;" width="13" height="17" viewBox="0 0 13 17"><path d="M1.5 0.5 H8.2 L12.5 4.8 V15.3 Q12.5 16.5 11.3 16.5 H1.5 Q0.5 16.5 0.5 15.3 V1.7 Q0.5 0.5 1.5 0.5z" fill="#5f6368"/><path d="M8 0.5 V5 H12.5" fill="#fff"/><path d="M8.2 0.5 V4.8 H12.5" stroke="#fff" stroke-width="1" fill="none"/></svg>
<div class="a" style="left:196.5px;top:583.95px;font-size:13.88px;line-height:13.88px;color:#2a2a2a;font-weight:400;font-family:'Liberation Sans';">ImageNet.yaml</div>
<svg style="left:174.0px;top:606.3px;" width="13" height="17" viewBox="0 0 13 17"><path d="M1.5 0.5 H8.2 L12.5 4.8 V15.3 Q12.5 16.5 11.3 16.5 H1.5 Q0.5 16.5 0.5 15.3 V1.7 Q0.5 0.5 1.5 0.5z" fill="#5f6368"/><path d="M8 0.5 V5 H12.5" fill="#fff"/><path d="M8.2 0.5 V4.8 H12.5" stroke="#fff" stroke-width="1" fill="none"/></svg>
<div class="a" style="left:196.5px;top:607.95px;font-size:13.88px;line-height:13.88px;color:#2a2a2a;font-weight:400;font-family:'Liberation Sans';">Objects365.yaml</div>
<svg style="left:174.0px;top:630.3px;" width="13" height="17" viewBox="0 0 13 17"><path d="M1.5 0.5 H8.2 L12.5 4.8 V15.3 Q12.5 16.5 11.3 16.5 H1.5 Q0.5 16.5 0.5 15.3 V1.7 Q0.5 0.5 1.5 0.5z" fill="#5f6368"/><path d="M8 0.5 V5 H12.5" fill="#fff"/><path d="M8.2 0.5 V4.8 H12.5" stroke="#fff" stroke-width="1" fill="none"/></svg>
<div class="a" style="left:196.5px;top:631.95px;font-size:13.88px;line-height:13.88px;color:#2a2a2a;font-weight:400;font-family:'Liberation Sans';">SKU-110K.yaml</div>
<svg style="left:174.0px;top:654.3px;" width="13" height="17" viewBox="0 0 13 17"><path d="M1.5 0.5 H8.2 L12.5 4.8 V15.3 Q12.5 16.5 11.3 16.5 H1.5 Q0.5 16.5 0.5 15.3 V1.7 Q0.5 0.5 1.5 0.5z" fill="#5f6368"/><path d="M8 0.5 V5 H12.5" fill="#fff"/><path d="M8.2 0.5 V4.8 H12.5" stroke="#fff" stroke-width="1" fill="none"/></svg>
<div class="a" style="left:196.5px;top:655.95px;font-size:13.88px;line-height:13.88px;color:#2a2a2a;font-weight:400;font-family:'Liberation Sans';">VOC.yaml</div>
<svg style="left:174.0px;top:678.3px;" width="13" height="17" viewBox="0 0 13 17"><path d="M1.5 0.5 H8.2 L12.5 4.8 V15.3 Q12.5 16.5 11.3 16.5 H1.5 Q0.5 16.5 0.5 15.3 V1.7 Q0.5 0.5 1.5 0.5z" fill="#5f6368"/><path d="M8 0.5 V5 H12.5" fill="#fff"/><path d="M8.2 0.5 V4.8 H12.5" stroke="#fff" stroke-width="1" fill="none"/></svg>
<div class="a" style="left:196.5px;top:679.95px;font-size:13.88px;line-height:13.88px;color:#2a2a2a;font-weight:400;font-family:'Liberation Sans';">VisDrone.yaml</div>
<svg style="left:174.0px;top:702.3px;" width="13" height="17" viewBox="0 0 13 17"><path d="M1.5 0.5 H8.2 L12.5 4.8 V15.3 Q12.5 16.5 11.3 16.5 H1.5 Q0.5 16.5 0.5 15.3 V1.7 Q0.5 0.5 1.5 0.5z" fill="#5f6368"/><path d="M8 0.5 V5 H12.5" fill="#fff"/><path d="M8.2 0.5 V4.8 H12.5" stroke="#fff" stroke-width="1" fill="none"/></svg>
<div class="a" style="left:196.5px;top:703.95px;font-size:13.88px;line-height:13.88px;color:#2a2a2a;font-weight:400;font-family:'Liberation Sans';">coco.yaml</div>
<svg style="left:174.0px;top:726.3px;" width="13" height="17" viewBox="0 0 13 17"><path d="M1.5 0.5 H8.2 L12.5 4.8 V15.3 Q12.5 16.5 11.3 16.5 H1.5 Q0.5 16.5 0.5 15.3 V1.7 Q0.5 0.5 1.5 0.5z" fill="#5f6368"/><path d="M8 0.5 V5 H12.5" fill="#fff"/><path d="M8.2 0.5 V4.8 H12.5" stroke="#fff" stroke-width="1" fill="none"/></svg>
<div class="a" style="left:196.5px;top:727.95px;font-size:13.88px;line-height:13.88px;color:#2a2a2a;font-weight:400;font-family:'Liberation Sans';">coco128-seg.yaml</div>
<svg style="left:174.0px;top:750.3px;" width="13" height="17" viewBox="0 0 13 17"><path d="M1.5 0.5 H8.2 L12.5 4.8 V15.3 Q12.5 16.5 11.3 16.5 H1.5 Q0.5 16.5 0.5 15.3 V1.7 Q0.5 0.5 1.5 0.5z" fill="#5f6368"/><path d="M8 0.5 V5 H12.5" fill="#fff"/><path d="M8.2 0.5 V4.8 H12.5" stroke="#fff" stroke-width="1" fill="none"/></svg>
<div class="a" style="left:196.5px;top:751.95px;font-size:13.88px;line-height:13.88px;color:#2a2a2a;font-weight:400;font-family:'Liberation Sans';">coco128.yaml</div>
<svg style="left:174.0px;top:774.3px;" width="13" height="17" viewBox="0 0 13 17"><path d="M1.5 0.5 H8.2 L12.5 4.8 V15.3 Q12.5 16.5 11.3 16.5 H1.5 Q0.5 16.5 0.5 15.3 V1.7 Q0.5 0.5 1.5 0.5z" fill="#5f6368"/><path d="M8 0.5 V5 H12.5" fill="#fff"/><path d="M8.2 0.5 V4.8 H12.5" stroke="#fff" stroke-width="1" fill="none"/></svg>
<div class="a" style="left:196.5px;top:775.95px;font-size:13.88px;line-height:13.88px;color:#2a2a2a;font-weight:400;font-family:'Liberation Sans';">customPath.yaml</div>
<svg style="left:174.0px;top:798.3px;" width="13" height="17" viewBox="0 0 13 17"><path d="M1.5 0.5 H8.2 L12.5 4.8 V15.3 Q12.5 16.5 11.3 16.5 H1.5 Q0.5 16.5 0.5 15.3 V1.7 Q0.5 0.5 1.5 0.5z" fill="#5f6368"/><path d="M8 0.5 V5 H12.5" fill="#fff"/><path d="M8.2 0.5 V4.8 H12.5" stroke="#fff" stroke-width="1" fill="none"/></svg>
<div class="a" style="left:196.5px;top:799.95px;font-size:13.88px;line-height:13.88px;color:#2a2a2a;font-weight:400;font-family:'Liberation Sans';">xView.yaml</div>
<svg style="left:152.5px;top:823.7px;" width="17.5" height="14.5" viewBox="0 0 17.5 14.5"><path d="M1 1.6 Q1 0.6 2 0.6 H6.6 L8.4 2.4 H15.6 Q16.6 2.4 16.6 3.4 V13 Q16.6 14 15.6 14 H2 Q1 14 1 13z" fill="#5f6368"/></svg>
<svg style="left:134.3px;top:827.7px;" width="4.6" height="7.6" viewBox="0 0 4.6 7.6"><path d="M0 0 L4.6 3.8 L0 7.6z" fill="#555"/></svg>
<div class="a" style="left:176.0px;top:823.95px;font-size:13.88px;line-height:13.88px;color:#2a2a2a;font-weight:400;font-family:'Liberation Sans';">models</div>
<div class="a" style="left:388px;top:316px;width:15px;height:524px;background:#f1f1f1"></div>
<div class="a" style="left:389.5px;top:330px;width:12px;height:284.5px;background:#c1c1c1"></div>
<svg style="left:392px;top:320px;" width="7" height="4" viewBox="0 0 7 4"><path d="M0 4 L3.5 0 L7 4z" fill="#a3a3a3"/></svg>
<svg style="left:392px;top:830px;" width="7" height="4" viewBox="0 0 7 4"><path d="M0 0 L3.5 4 L7 0z" fill="#505050"/></svg>
<div class="a" style="left:112px;top:846.18px;font-size:11.6px;line-height:11.6px;color:#3c4043;font-weight:400;font-family:'Liberation Sans';">Disk</div>
<div class="a" style="left:143.5px;top:847px;width:147px;height:9px;background:#fff;border:1px solid #c6c6c6"></div>
<div class="a" style="left:144.5px;top:848px;width:30px;height:7px;background:#a0a0a0"></div>
<div class="a" style="left:296.4px;top:846.12px;font-size:11.67px;line-height:11.67px;color:#3c4043;font-weight:400;font-family:'Liberation Sans';">84.70 GB available</div>
<div class="a" style="left:405px;top:196px;width:1131px;height:36px;background:#fff"></div>
<div class="a" style="left:405px;top:232px;width:1131px;height:1px;background:#dadce0"></div>
<div class="a" style="left:405px;top:233px;width:1131px;height:3px;background:linear-gradient(180deg,rgba(0,0,0,.08),rgba(0,0,0,0))"></div>
<svg style="left:423.5px;top:209px;" width="9" height="9" viewBox="0 0 9 9"><path d="M4.5 0V9M0 4.5H9" stroke="#3c4043" stroke-width="1.3"/></svg>
<div class="a" style="left:440px;top:207.48px;font-size:14.2px;line-height:14.2px;color:#3c4043;font-weight:400;font-family:'Liberation Sans';">Code</div>
<svg style="left:491px;top:209px;" width="9" height="9" viewBox="0 0 9 9"><path d="M4.5 0V9M0 4.5H9" stroke="#3c4043" stroke-width="1.3"/></svg>
<div class="a" style="left:507.4px;top:207.48px;font-size:14.2px;line-height:14.2px;color:#3c4043;font-weight:400;font-family:'Liberation Sans';">Text</div>
<div class="a" style="left:1247.0px;top:212px;width:3.6px;height:3.6px;background:#19d24a;border-radius:50%"></div>
<div class="a" style="left:1251.8px;top:212px;width:3.6px;height:3.6px;background:#19d24a;border-radius:50%"></div>
<div class="a" style="left:1256.6px;top:212px;width:3.6px;height:3.6px;background:#19d24a;border-radius:50%"></div>
<div class="a" style="left:1267.5px;top:201.15px;font-size:11.4px;line-height:11.4px;color:#3c4043;font-weight:400;font-family:'Liberation Sans';">RAM</div>
<div class="a" style="left:1270.6px;top:215.98px;font-size:11.6px;line-height:11.6px;color:#3c4043;font-weight:400;font-family:'Liberation Sans';">Disk</div>
<div class="a" style="left:1301.5px;top:201.5px;width:41.5px;height:9px;background:#fff;border:1px solid #c6c6c6"></div>
<div class="a" style="left:1302.5px;top:202.5px;width:4px;height:7px;background:#a0a0a0"></div>
<div class="a" style="left:1301.5px;top:216.5px;width:41.5px;height:9px;background:#fff;border:1px solid #c6c6c6"></div>
<div class="a" style="left:1302.5px;top:217.5px;width:9px;height:7px;background:#a0a0a0"></div>
<svg style="left:1356.5px;top:212.5px;" width="9" height="5" viewBox="0 0 9 5"><path d="M0 0H9L4.5 5z" fill="#3c4043"/></svg>
<div class="a" style="left:1380.5px;top:203px;width:1px;height:23px;background:#dadce0"></div>
<svg style="left:1399px;top:205.5px;" width="19" height="19" viewBox="0 0 24 24"><path d="M3 17.25V21h3.75L17.81 9.94l-3.75-3.75L3 17.25zM20.71 7.04c.39-.39.39-1.02 0-1.41l-2.34-2.34c-.39-.39-1.02-.39-1.41 0l-1.83 1.83 3.75 3.75 1.83-1.83z" fill="#5f6368"/></svg>
<div class="a" style="left:1422.5px;top:208.14px;font-size:13.77px;line-height:13.77px;color:#5f6368;font-weight:400;font-family:'Liberation Sans';">Editing</div>
<div class="a" style="left:1482px;top:203px;width:1px;height:23px;background:#dadce0"></div>
<svg style="left:1497.5px;top:210px;" width="13" height="8.5" viewBox="0 0 13 8.5"><path d="M1 7.5 L6.5 2 L12 7.5" stroke="#3c4043" stroke-width="1.8" fill="none"/></svg>
<div class="a" style="left:426.5px;top:238px;width:1093.5px;height:39px;background:#f7f7f7"></div>
<svg style="left:433px;top:244px;" width="28" height="28" viewBox="0 0 28 28"><path d="M1.04 16.52 A13.2 13.2 0 0 1 26.5 9.7" stroke="#3c3c3c" stroke-width="2.4" fill="none"/><circle cx="14" cy="14.5" r="9.8" fill="#bdbdbd"/><rect x="11" y="11.5" width="6" height="6" fill="#f5f5f5"/></svg>
<svg style="left:467.5px;top:251.5px;" width="4.5" height="10" viewBox="0 0 4.5 10"><path d="M0 0 L4.5 5 L0 10z" fill="#12c93a"/></svg>
<pre style="left:473px;top:249.57px;font-size:14.05px;line-height:17.375px;color:#212121"><span style="color:#7b3fe4">!</span>python train.py --img <span style="color:#098658">640</span> --batch <span style="color:#098658">16</span> --epochs <span style="color:#098658">3</span> --data customPath.yaml --weights yolov5s.pt</pre>
<div class="a" style="left:1147px;top:248px;width:1.2px;height:29px;background:#d6d6d6"></div>
<pre style="left:467.5px;top:279.47px;font-size:14.05px;line-height:17.375px;color:#333"><span style="font-weight:bold;color:#5c00ff">ClearML:</span> run 'pip install clearml' to automatically track, visualize and remotely train YOLOv5 <span style="display:inline-block;width:16.86px;height:10px;position:relative"><svg style="left:1.2px;top:-1.8px" width="14" height="14" viewBox="0 0 14 14"><path d="M1.8 5.6 L4.6 4.2 L6.4 6z" fill="#2a7de1"/><path d="M8.4 12.2 L9.8 9.4 L8 7.6z" fill="#2a7de1"/><ellipse cx="7.6" cy="6.4" rx="6.2" ry="2.7" transform="rotate(-45 7.6 6.4)" fill="#d3d3d3"/><path d="M10.4 0.8 L13.6 0.4 L13.2 3.6 Q12.2 1.8 10.4 0.8z" fill="#ee1c25"/><path d="M9.6 1.2 Q12 1.6 12.8 4.4 L13.6 0.4z" fill="#ee1c25"/><circle cx="9.1" cy="4.9" r="0.95" fill="#3a5a70"/><circle cx="6.9" cy="7.1" r="0.95" fill="#3a5a70"/><path d="M0.4 13.6 L2 10.4 L3.6 12z" fill="#f5c400"/><path d="M2.2 10.4 L3.4 9.6 L4.4 10.6 L3.6 11.8z" fill="#222"/><path d="M1.2 12 L2.4 10.8 L3.2 11.6 L2 12.8z" fill="#f07800"/></svg></span> in ClearML
<span style="font-weight:bold;color:#5c00ff">Comet:</span> run 'pip install comet_ml' to automatically track and visualize YOLOv5 <span style="display:inline-block;width:16.86px;height:10px;position:relative"><svg style="left:1.2px;top:-1.8px" width="14" height="14" viewBox="0 0 14 14"><path d="M1.8 5.6 L4.6 4.2 L6.4 6z" fill="#2a7de1"/><path d="M8.4 12.2 L9.8 9.4 L8 7.6z" fill="#2a7de1"/><ellipse cx="7.6" cy="6.4" rx="6.2" ry="2.7" transform="rotate(-45 7.6 6.4)" fill="#d3d3d3"/><path d="M10.4 0.8 L13.6 0.4 L13.2 3.6 Q12.2 1.8 10.4 0.8z" fill="#ee1c25"/><path d="M9.6 1.2 Q12 1.6 12.8 4.4 L13.6 0.4z" fill="#ee1c25"/><circle cx="9.1" cy="4.9" r="0.95" fill="#3a5a70"/><circle cx="6.9" cy="7.1" r="0.95" fill="#3a5a70"/><path d="M0.4 13.6 L2 10.4 L3.6 12z" fill="#f5c400"/><path d="M2.2 10.4 L3.4 9.6 L4.4 10.6 L3.6 11.8z" fill="#222"/><path d="M1.2 12 L2.4 10.8 L3.2 11.6 L2 12.8z" fill="#f07800"/></svg></span> runs in Comet
<span style="font-weight:bold;color:#5c00ff">TensorBoard:</span> Start with 'tensorboard --logdir runs/train', view at <span style="color:#5c00ff;text-decoration:underline">http://localhost:6006/</span>
Downloading <span style="color:#5c00ff;text-decoration:underline">https://ultralytics.com/assets/Arial.ttf</span> to /root/.config/Ultralytics/Arial.ttf...
100% 755k/755k [00:00&lt;00:00, 122MB/s]
Downloading <span style="color:#5c00ff;text-decoration:underline">https://github.com/ultralytics/yolov5/releases/download/v6.2/yolov5s.pt</span> to yolov5s.pt...
100% 14.1M/14.1M [00:00&lt;00:00, 304MB/s]

Overriding model.yaml nc=80 with nc=1

                 from  n    params  module                                  arguments
  0                -1  1      3520  models.common.Conv                      [3, 32, 6, 2, 2]
  1                -1  1     18560  models.common.Conv                      [32, 64, 3, 2]
  2                -1  1     18816  models.common.C3                        [64, 64, 1]
  3                -1  1     73984  models.common.Conv                      [64, 128, 3, 2]
  4                -1  2    115712  models.common.C3                        [128, 128, 2]
  5                -1  1    295424  models.common.Conv                      [128, 256, 3, 2]
  6                -1  3    625152  models.common.C3                        [256, 256, 3]
  7                -1  1   1180672  models.common.Conv                      [256, 512, 3, 2]
  8                -1  1   1182720  models.common.C3                        [512, 512, 1]
  9                -1  1    656896  models.common.SPPF                      [512, 512, 5]
 10                -1  1    131584  models.common.Conv                      [512, 256, 1, 1]
 11                -1  1         0  torch.nn.modules.upsampling.Upsample    [None, 2, &#x27;nearest&#x27;]
 12           [-1, 6]  1         0  models.common.Concat                    [1]
 13                -1  1    361984  models.common.C3                        [512, 256, 1, False]
 14                -1  1     33024  models.common.Conv                      [256, 128, 1, 1]
 15                -1  1         0  torch.nn.modules.upsampling.Upsample    [None, 2, &#x27;nearest&#x27;]
 16           [-1, 4]  1         0  models.common.Concat                    [1]
 17                -1  1     90880  models.common.C3                        [256, 128, 1, False]
 18                -1  1    147712  models.common.Conv                      [128, 128, 3, 2]
 19          [-1, 14]  1         0  models.common.Concat                    [1]
 20                -1  1    296448  models.common.C3                        [256, 256, 1, False]
 21                -1  1    590336  models.common.Conv                      [256, 256, 3, 2]
 22          [-1, 10]  1         0  models.common.Concat                    [1]</pre>
<div class="a" style="left:1504px;top:278px;width:14.5px;height:586px;background:#f1f1f1"></div>
<svg style="left:1507.5px;top:284px;" width="7" height="4" viewBox="0 0 7 4"><path d="M0 4 L3.5 0 L7 4z" fill="#505050"/></svg>
<div class="a" style="left:1505px;top:375.5px;width:13px;height:488.5px;background:#c1c1c1"></div>
<div class="a" style="left:1523.5px;top:515px;width:13px;height:109px;background:#e6e6e6;border:1px solid #cfcfcf;border-right:none"></div>
</body></html>
